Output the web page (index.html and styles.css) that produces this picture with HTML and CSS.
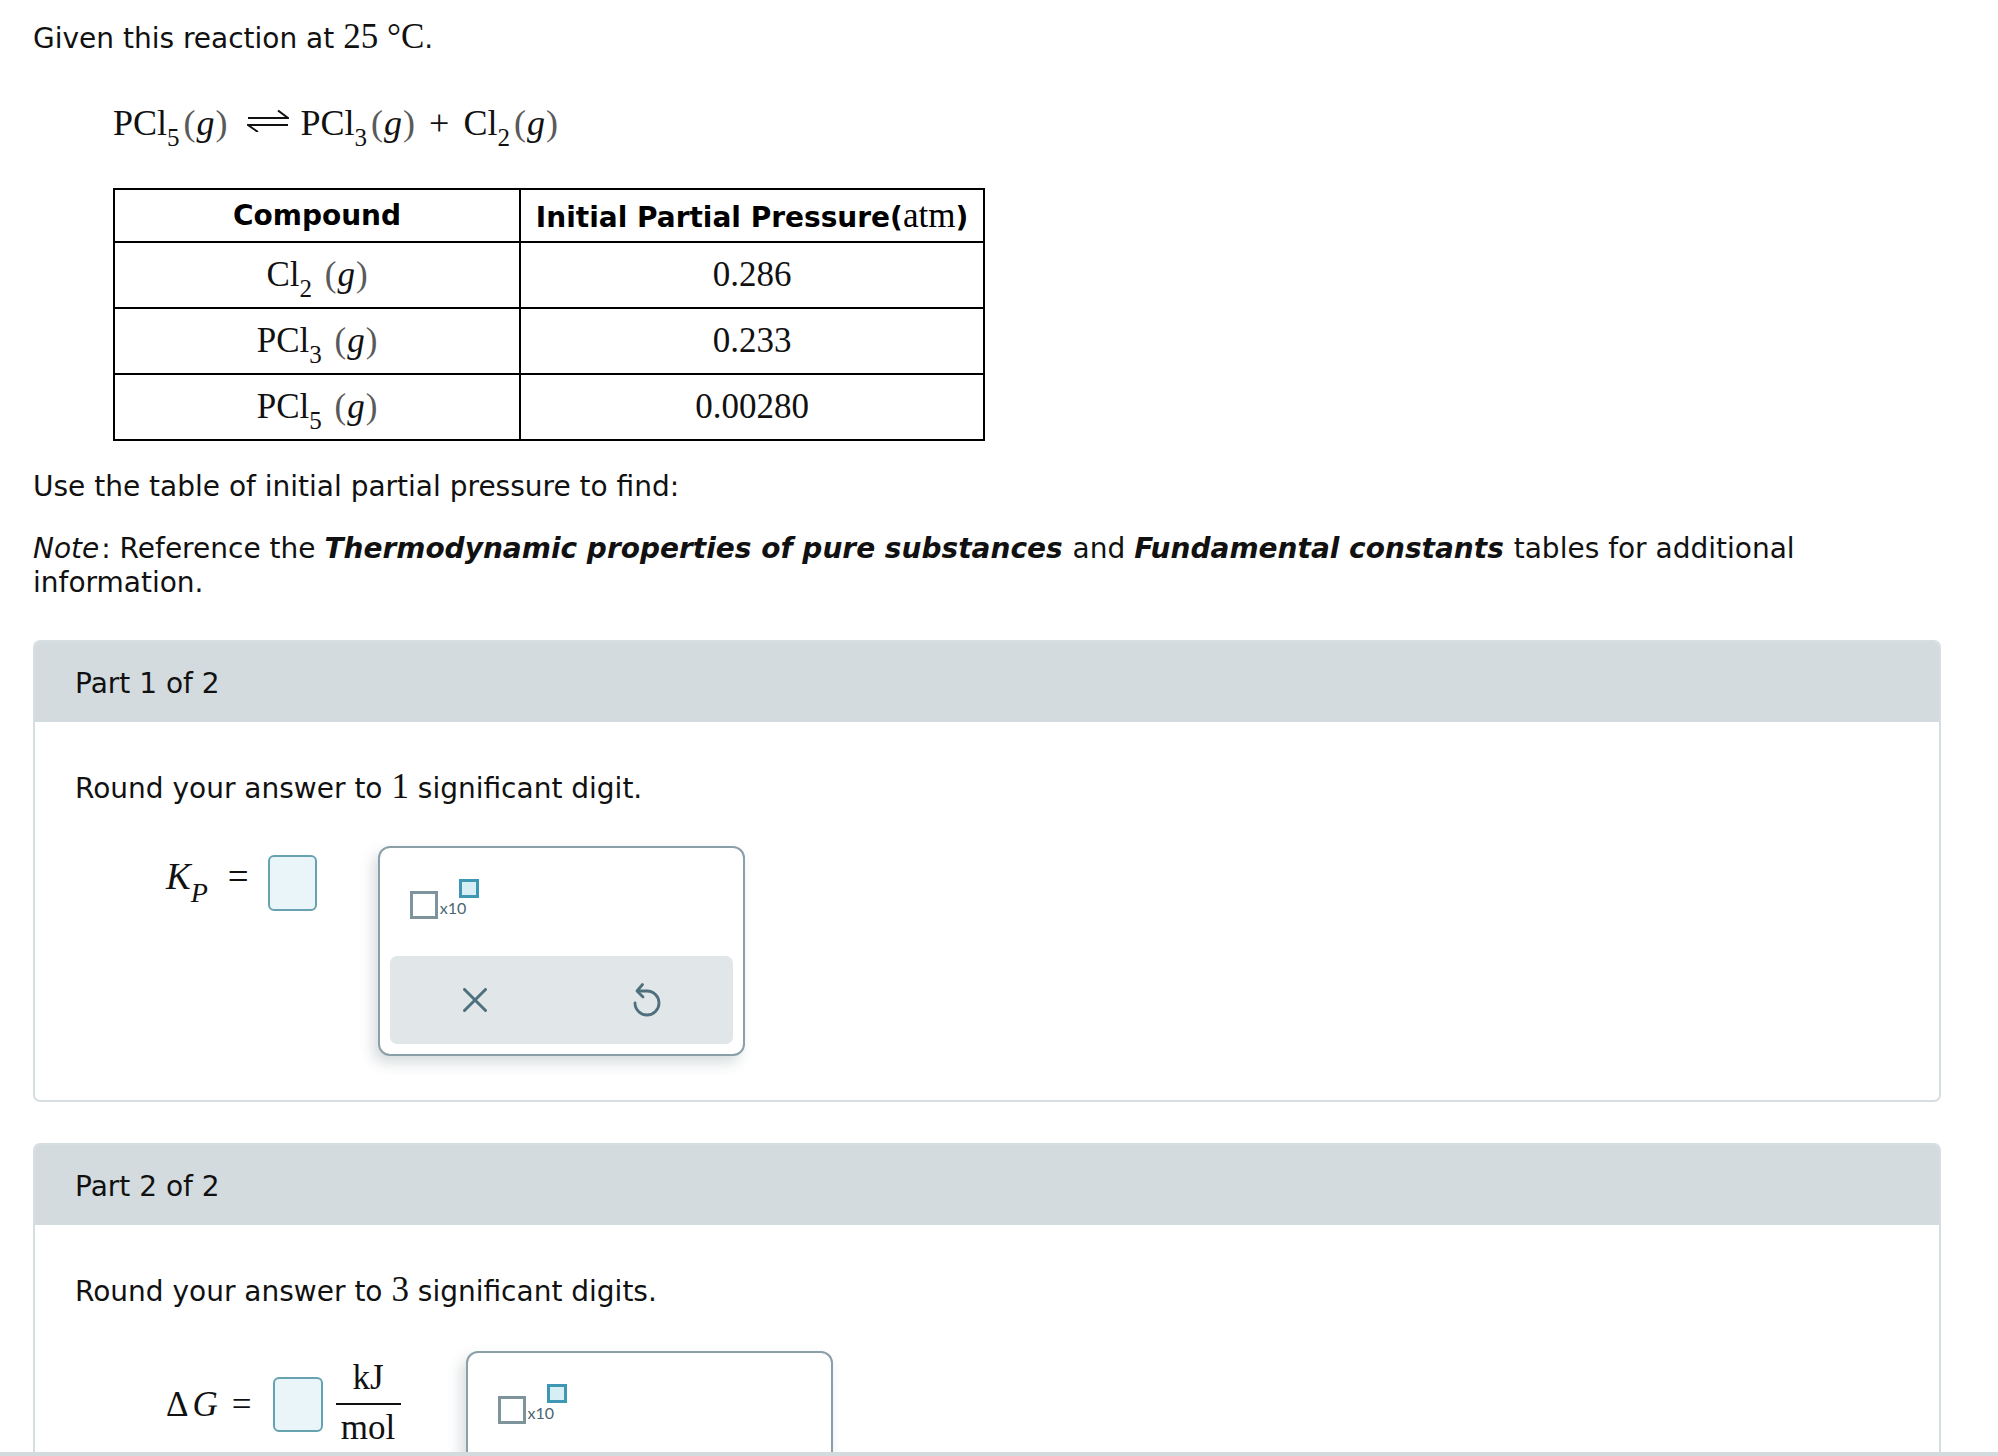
FILE: index.html
```html
<!DOCTYPE html>
<html lang="en">
<head>
<meta charset="utf-8">
<title>Equilibrium question</title>
<link rel="stylesheet" href="styles.css">
</head>
<body>
<div class="page">
  <p class="intro">Given this reaction at <span class="m">25 °C</span>.</p>

  <div class="eq">PCl<span class="sb">5</span><span class="ph"><span class="pr">(</span><i>g</i><span class="pr">)</span></span><span class="arrow"><svg width="42" height="22" viewBox="0 0 42 22"><path d="M1 8 H41 L31 0.5 M41 15 H1 L11 22" fill="none" stroke="#111" stroke-width="2" stroke-linejoin="miter"/></svg></span>PCl<span class="sb">3</span><span class="ph"><span class="pr">(</span><i>g</i><span class="pr">)</span></span><span class="plus">+</span>Cl<span class="sb">2</span><span class="ph"><span class="pr">(</span><i>g</i><span class="pr">)</span></span></div>

  <table class="data">
    <colgroup><col class="c1"><col class="c2"></colgroup>
    <tr><th>Compound</th><th>Initial Partial Pressure(<span class="m atm">atm</span>)</th></tr>
    <tr><td>Cl<span class="sb">2</span> <span class="ph"><span class="pr">(</span><i>g</i><span class="pr">)</span></span></td><td>0.286</td></tr>
    <tr><td>PCl<span class="sb">3</span> <span class="ph"><span class="pr">(</span><i>g</i><span class="pr">)</span></span></td><td>0.233</td></tr>
    <tr><td>PCl<span class="sb">5</span> <span class="ph"><span class="pr">(</span><i>g</i><span class="pr">)</span></span></td><td>0.00280</td></tr>
  </table>

  <p class="use">Use the table of initial partial pressure to find:</p>
  <p class="note"><i>Note</i>: Reference the <b><i>Thermodynamic properties of pure substances</i></b> and <b><i>Fundamental constants</i></b> tables for additional information.</p>

  <section class="part">
    <div class="part-head">Part 1 of 2</div>
    <div class="part-body">
      <p class="round">Round your answer to <span class="m">1</span> significant digit.</p>
      <div class="answer">
        <div class="mexpr kp"><i>K</i><i class="subp">P</i><span class="eqsign">=</span></div>
        <div class="inbox kpbox"></div>
        <div class="widget w1">
          <div class="sci"><span class="bigbox"></span><span class="x10">x10</span><span class="supbox"></span></div>
          <div class="btnbar">
            <button class="btn" type="button"><svg width="24" height="24" viewBox="0 0 24 24"><path d="M1.5 1.5 L22.5 22.5 M22.5 1.5 L1.5 22.5" fill="none" stroke="#4e6f7b" stroke-width="3" stroke-linecap="round"/></svg></button>
            <button class="btn" type="button"><svg width="30" height="36" viewBox="0 0 30 36"><path d="M6 9 H15 A12 12 0 1 1 3 21" fill="none" stroke="#4e6f7b" stroke-width="2.8" stroke-linecap="round"/><path d="M10.5 2.5 L5 9 L11 15" fill="none" stroke="#4e6f7b" stroke-width="2.8" stroke-linecap="round" stroke-linejoin="round"/></svg></button>
          </div>
        </div>
      </div>
    </div>
  </section>

  <section class="part">
    <div class="part-head">Part 2 of 2</div>
    <div class="part-body">
      <p class="round">Round your answer to <span class="m">3</span> significant digits.</p>
      <div class="answer a2">
        <div class="mexpr dg"><span>Δ</span><i class="G">G</i><span class="eqsign eq2">=</span></div>
        <div class="inbox dgbox"></div>
        <div class="frac"><span class="num">kJ</span><span class="bar"></span><span class="den">mol</span></div>
        <div class="widget w2">
          <div class="sci"><span class="bigbox"></span><span class="x10">x10</span><span class="supbox"></span></div>
          <div class="btnbar">
            <button class="btn" type="button"><svg width="24" height="24" viewBox="0 0 24 24"><path d="M1.5 1.5 L22.5 22.5 M22.5 1.5 L1.5 22.5" fill="none" stroke="#4e6f7b" stroke-width="3" stroke-linecap="round"/></svg></button>
            <button class="btn" type="button"><svg width="30" height="36" viewBox="0 0 30 36"><path d="M6 9 H15 A12 12 0 1 1 3 21" fill="none" stroke="#4e6f7b" stroke-width="2.8" stroke-linecap="round"/><path d="M10.5 2.5 L5 9 L11 15" fill="none" stroke="#4e6f7b" stroke-width="2.8" stroke-linecap="round" stroke-linejoin="round"/></svg></button>
          </div>
        </div>
      </div>
    </div>
  </section>
</div>
<div class="bottom-strip"></div>
</body>
</html>
```

FILE: styles.css
```css
html, body {
  margin: 0;
  background: #ffffff;
}

body {
  color: #111111;
  font-family: "DejaVu Sans", Verdana, sans-serif;
  font-size: 28px;
}

.page {
  padding: 19px 57px 0 33px;
}

.m {
  font-family: "Liberation Serif", "Times New Roman", serif;
  font-size: 35px;
  line-height: 1;
}

.intro {
  margin: 0;
  line-height: 40px;
}

/* chemical equation */
.eq {
  margin: 42px 0 0 80px;
  font-family: "Liberation Serif", "Times New Roman", serif;
  font-size: 36px;
  line-height: 44px;
  white-space: nowrap;
}

.sb {
  font-size: 25px;
  line-height: 0;
  vertical-align: -11px;
}

.ph {
  margin-left: 4px;
}

.ph i {
  margin: 0 1px;
}

.pr {
  color: #5a5a5a;
}

.arrow {
  display: inline-block;
  margin: 0 12px 0 19px;
  vertical-align: 3px;
  line-height: 0;
}

.plus {
  margin: 0 14px 0 14px;
}

/* data table */
.data {
  margin: 43px 0 0 80px;
  border-collapse: collapse;
  width: 872px;
}

.data .c1 {
  width: 406px;
}

.data th,
.data td {
  border: 2px solid #000000;
  text-align: center;
  vertical-align: middle;
  padding: 0;
}

.data th {
  height: 51px;
  font-size: 28px;
  font-weight: bold;
  color: #000000;
}

.data th .atm {
  font-weight: normal;
}

.data td {
  height: 64px;
  font-family: "Liberation Serif", "Times New Roman", serif;
  font-size: 35px;
}

.use {
  margin: 26px 0 0;
  line-height: 40px;
}

.note {
  margin: 25px 0 0;
  line-height: 34px;
}

.note i {
  padding-right: 2px;
}

.note b i {
  padding-right: 1px;
}

/* parts */
.part {
  margin-top: 40px;
  border: 2px solid #d7dee2;
  border-radius: 7px;
  overflow: hidden;
  background: #ffffff;
}

.part + .part {
  margin-top: 41px;
}

.part-head {
  height: 80px;
  line-height: 83px;
  background: #d3dbdf;
  padding-left: 40px;
}

.part-body {
  padding: 47px 40px 44px;
}

.round {
  margin: 0;
  line-height: 40px;
}

.answer {
  display: flex;
  align-items: flex-start;
  margin: 37px 0 0 91px;
}

.answer.a2 {
  margin-top: 39px;
}

.mexpr {
  font-family: "Liberation Serif", "Times New Roman", serif;
  line-height: 40px;
  white-space: nowrap;
}

.kp {
  font-size: 37px;
  margin-top: 11px;
}

.subp {
  font-size: 28px;
  line-height: 0;
  vertical-align: -13px;
}

.eqsign {
  margin-left: 20px;
}

.dg {
  font-size: 35px;
  margin-top: 34px;
}

.dg .G {
  margin-left: 4px;
}

.eq2 {
  margin-left: 14px;
}

.inbox {
  box-sizing: border-box;
  border: 2.5px solid #67a2b0;
  border-radius: 6px;
  background: #e9f5f9;
}

.kpbox {
  width: 49px;
  height: 56px;
  margin: 9px 0 0 19px;
}

.dgbox {
  width: 50px;
  height: 55px;
  margin: 26px 0 0 21px;
}

.frac {
  display: flex;
  flex-direction: column;
  align-items: center;
  width: 65px;
  margin: 12px 0 0 13px;
  font-family: "Liberation Serif", "Times New Roman", serif;
  font-size: 35px;
}

.frac .num,
.frac .den {
  line-height: 30px;
}

.frac .bar {
  align-self: stretch;
  height: 2px;
  background: #111111;
  margin-top: 10px;
}

.frac .den {
  margin-top: 8px;
}

/* answer widget */
.widget {
  width: 367px;
  height: 210px;
  box-sizing: border-box;
  border: 2px solid #8b9fa8;
  border-radius: 12px;
  background: #ffffff;
  box-shadow: -5px 7px 14px rgba(40, 60, 70, 0.18);
  padding: 0 10px 10px;
  display: flex;
  flex-direction: column;
  flex: none;
}

.w1 {
  margin-left: 61px;
}

.w2 {
  margin-left: 65px;
}

.sci {
  display: flex;
  align-items: flex-end;
  height: 40px;
  margin: 31px 0 0 20px;
}

.bigbox {
  width: 28px;
  height: 28px;
  box-sizing: border-box;
  border: 3px solid #7e949d;
}

.x10 {
  font-family: Lato, "Open Sans", sans-serif;
  font-size: 16px;
  line-height: 16px;
  color: #4b6670;
  margin: 0 0 3px 2px;
}

.supbox {
  align-self: flex-start;
  width: 20px;
  height: 19px;
  box-sizing: border-box;
  border: 3px solid #3e98b4;
  background: #d7eef4;
  margin-left: -7px;
}

.btnbar {
  margin-top: auto;
  height: 88px;
  background: #e1e6e9;
  border-radius: 7px;
  display: flex;
}

.btn {
  flex: 1;
  display: flex;
  align-items: center;
  justify-content: center;
  border: 0;
  background: transparent;
  padding: 0;
  margin: 0;
}

.bottom-strip {
  position: fixed;
  left: 0;
  right: 0;
  bottom: 0;
  height: 4px;
  background: #d3dbdf;
}
```
